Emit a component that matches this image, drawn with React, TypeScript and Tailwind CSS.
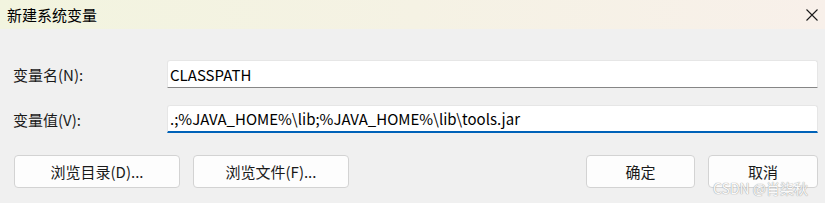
import React from 'react';

const font = { fontFamily: '"Noto Sans CJK SC", "Liberation Sans", sans-serif' };

interface FieldRowProps {
  label: string;
  value: string;
  focused?: boolean;
}

const FieldRow: React.FC<FieldRowProps> = ({ label, value, focused }) => (
  <div className="flex items-center h-[28px]">
    <label className="w-[167px] pl-[13px] text-[15px] text-[#1a1a1a] leading-none">{label}</label>
    <div
      className={`flex-1 h-[28px] flex items-center bg-white border border-[#e6e6e6] rounded-t-[3px] pl-[2px] text-[15px] text-black leading-none ${
        focused ? 'border-b-2 border-b-[#0062b8]' : 'border-b border-b-[#868686]'
      }`}
    >
      {value}
    </div>
  </div>
);

const Btn: React.FC<{ width: string; children: React.ReactNode }> = ({ width, children }) => (
  <button
    className={`${width} h-[33px] bg-[#fdfdfd] border border-[#d3d3d3] rounded-[4px] text-[15px] text-[#1a1a1a] leading-none flex items-center justify-center`}
  >
    {children}
  </button>
);

export default function App() {
  return (
    <div className="w-[825px] h-[203px] bg-[#f0f0f0] relative overflow-hidden" style={font}>
      <div className="h-[29px] flex items-center justify-between pl-[7px] pr-[7px] bg-gradient-to-r from-[#f2f4df] via-[#f5f2e4] to-[#f8f0ea]">
        <span className="text-[15px] text-black leading-none">新建系统变量</span>
        <svg width="12" height="12" viewBox="0 0 12 12">
          <path d="M0.5 0.5 L11.5 11.5 M11.5 0.5 L0.5 11.5" stroke="#1a1a1a" strokeWidth="1.1" />
        </svg>
      </div>
      <div className="pr-[7px] pt-[31px] flex flex-col gap-[17px]">
        <FieldRow label="变量名(N):" value="CLASSPATH" />
        <FieldRow label="变量值(V):" value=".;%JAVA_HOME%\lib;%JAVA_HOME%\lib\tools.jar" focused />
      </div>
      <div className="flex items-center pl-[14px] pr-[7px] pt-[22px]">
        <Btn width="w-[166px]">浏览目录(D)...</Btn>
        <div className="w-[13px]" />
        <Btn width="w-[156px]">浏览文件(F)...</Btn>
        <div className="flex-1" />
        <Btn width="w-[109px]">确定</Btn>
        <div className="w-[13px]" />
        <Btn width="w-[110px]">取消</Btn>
      </div>
      <span className="absolute left-[713px] top-[181px] text-[14px] leading-none text-[#fafafa] [text-shadow:0_0_1px_#a0a0a0,0_0_1px_#a0a0a0]">
        CSDN @肖柒秋
      </span>
    </div>
  );
}
